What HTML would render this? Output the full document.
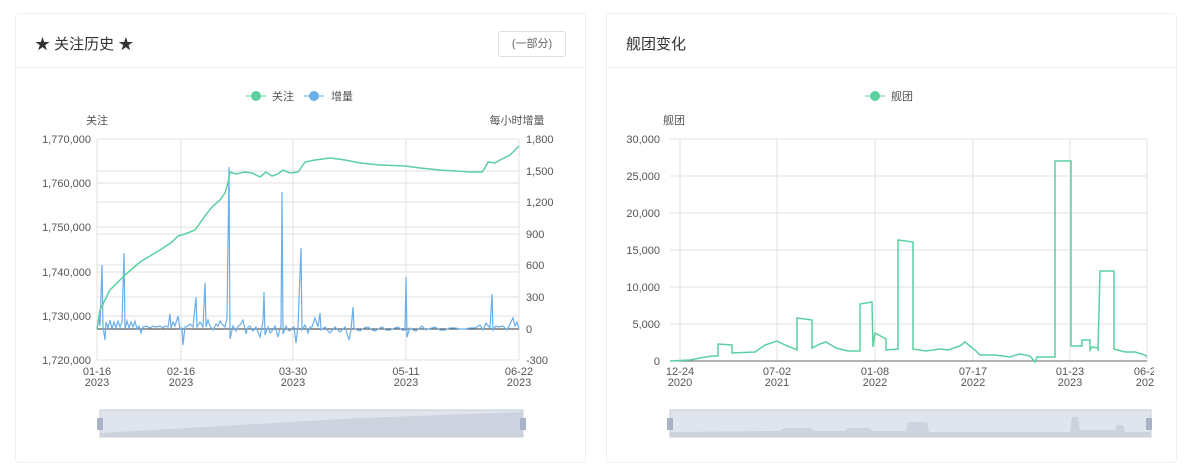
<!DOCTYPE html>
<html><head><meta charset="utf-8"><style>
body{margin:0;background:#fff;width:1192px;height:474px;overflow:hidden;font-family:"Liberation Sans","Noto Sans CJK SC",sans-serif;}
.card{position:absolute;top:13px;height:448px;border:1px solid #eef0f2;border-radius:4px;background:#fff}
.hd{position:absolute;left:0;right:0;top:0;height:53px;border-bottom:1px solid #eef0f2}
.t{position:absolute;left:19px;top:19px;font-size:15px;color:#333}
.btn{position:absolute;right:19px;top:17px;width:66px;height:24px;border:1px solid #dcdfe6;border-radius:3px;font-size:11px;color:#666;text-align:center;line-height:24px}
svg{position:absolute;left:0;top:0}
text{font-family:"Liberation Sans","Noto Sans CJK SC",sans-serif;font-size:11px;fill:#555}
</style></head><body>
<div class="card" style="left:15px;width:569px"><div class="hd"><div class="t">★ 关注历史 ★</div><div class="btn">(一部分)</div></div></div>
<div class="card" style="left:606px;width:569px"><div class="hd"><div class="t">舰团变化</div></div></div>
<svg width="1192" height="474">
<defs><clipPath id="c"><rect x="606" y="0" width="548" height="474"/></clipPath></defs>
<g stroke="#e0e0e0" stroke-width="1">
<line x1="97" y1="139" x2="519" y2="139"/><line x1="97" y1="171" x2="519" y2="171"/><line x1="97" y1="183" x2="519" y2="183"/><line x1="97" y1="202" x2="519" y2="202"/><line x1="97" y1="227" x2="519" y2="227"/><line x1="97" y1="234" x2="519" y2="234"/><line x1="97" y1="265" x2="519" y2="265"/><line x1="97" y1="272" x2="519" y2="272"/><line x1="97" y1="297" x2="519" y2="297"/><line x1="97" y1="316" x2="519" y2="316"/><line x1="97" y1="360" x2="519" y2="360"/>
<line x1="97" y1="139" x2="97" y2="360"/><line x1="181" y1="139" x2="181" y2="360"/><line x1="293" y1="139" x2="293" y2="360"/><line x1="406" y1="139" x2="406" y2="360"/><line x1="519" y1="139" x2="519" y2="360"/>
<line x1="670" y1="139" x2="1147" y2="139"/><line x1="670" y1="176" x2="1147" y2="176"/><line x1="670" y1="213" x2="1147" y2="213"/><line x1="670" y1="250" x2="1147" y2="250"/><line x1="670" y1="287" x2="1147" y2="287"/><line x1="670" y1="324" x2="1147" y2="324"/>
<line x1="680" y1="139" x2="680" y2="361"/><line x1="777" y1="139" x2="777" y2="361"/><line x1="875" y1="139" x2="875" y2="361"/><line x1="973" y1="139" x2="973" y2="361"/><line x1="1070" y1="139" x2="1070" y2="361"/><line x1="1147" y1="139" x2="1147" y2="361"/>
</g>
<line x1="97" y1="329" x2="519" y2="329" stroke="#333"/>
<line x1="670" y1="361" x2="1147" y2="361" stroke="#666"/>
<g text-anchor="end">
<text x="91" y="143">1,770,000</text><text x="91" y="187">1,760,000</text><text x="91" y="231">1,750,000</text><text x="91" y="276">1,740,000</text><text x="91" y="320">1,730,000</text><text x="91" y="364">1,720,000</text>
<text x="660" y="143">30,000</text><text x="660" y="180">25,000</text><text x="660" y="217">20,000</text><text x="660" y="254">15,000</text><text x="660" y="291">10,000</text><text x="660" y="328">5,000</text><text x="660" y="365">0</text>
</g>
<g text-anchor="start"><text x="526" y="143">1,800</text><text x="526" y="175">1,500</text><text x="526" y="206">1,200</text><text x="526" y="238">900</text><text x="526" y="269">600</text><text x="526" y="301">300</text><text x="526" y="333">0</text><text x="526" y="364">-300</text></g>
<g text-anchor="middle">
<text x="97" y="375">01-16</text><text x="97" y="386">2023</text><text x="181" y="375">02-16</text><text x="181" y="386">2023</text><text x="293" y="375">03-30</text><text x="293" y="386">2023</text><text x="406" y="375">05-11</text><text x="406" y="386">2023</text><text x="519" y="375">06-22</text><text x="519" y="386">2023</text>
<text x="680" y="375">12-24</text><text x="680" y="386">2020</text><text x="777" y="375">07-02</text><text x="777" y="386">2021</text><text x="875" y="375">01-08</text><text x="875" y="386">2022</text><text x="973" y="375">07-17</text><text x="973" y="386">2022</text><text x="1070" y="375">01-23</text><text x="1070" y="386">2023</text>
<g clip-path="url(#c)"><text x="1148" y="375">06-22</text><text x="1148" y="386">2023</text></g>
<text x="97" y="124">关注</text><text x="517" y="124">每小时增量</text><text x="674" y="124">舰团</text>
</g>
<line x1="246" y1="96" x2="266" y2="96" stroke="#5ad0a0"/><circle cx="256" cy="96" r="5" fill="#5ad0a0"/><text x="272" y="100">关注</text>
<line x1="304" y1="96" x2="324" y2="96" stroke="#6aaeea"/><circle cx="314" cy="96" r="5" fill="#6aaeea"/><text x="331" y="100">增量</text>
<line x1="865" y1="96" x2="885" y2="96" stroke="#5ad0a0"/><circle cx="875" cy="96" r="5" fill="#5ad0a0"/><text x="891" y="100">舰团</text>
<polyline fill="none" stroke="#6aaeea" stroke-width="1.2" points="97,329 99,318 100,326 102,265 103,327 105,340 106,322 108,328 110,320 112,329 114,322 116,328 118,321 120,327 122,322 124,253 125,329 127,321 129,328 131,322 133,327 135,321 137,329 139,326 141,333 143,327 146,326 150,328 153,326 156,327 160,326 163,328 165,326 168,327 170,314 171,328 173,322 175,326 178,316 180,329 182,328 183,345 185,327 188,326 190,324 193,327 196,297 197,327 200,322 203,327 205,283 206,327 208,320 210,326 213,330 216,324 218,326 220,321 222,324 225,327 227,318 229,167 230,339 233,326 236,331 238,326 240,325 243,320 246,334 248,327 250,326 253,331 256,327 258,332 260,337 262,327 263,321 264,292 265,335 268,327 270,333 272,331 275,326 278,337 280,328 281,327 282,192 283,334 286,326 288,330 290,331 292,328 294,327 296,343 298,326 301,248 302,330 305,325 308,333 310,327 312,327 315,318 318,327 320,313 321,330 325,327 328,331 330,333 335,327 338,330 340,332 345,327 349,340 351,330 353,307 354,328 357,330 360,331 364,328 368,327 372,330 375,331 380,328 382,327 386,330 390,330 395,328 398,327 402,330 405,330 406,277 407,337 410,328 413,330 416,331 420,328 422,326 426,330 428,329 432,328 435,327 440,330 445,330 450,328 455,328 460,329 465,329 470,328 475,328 480,325 483,330 486,323 490,328 492,294 493,330 496,326 498,327 503,326 507,330 510,324 513,318 515,326 517,322 519,329"/>
<polyline fill="none" stroke="#5ad0a0" stroke-width="1.5" points="97,329 100,310 110,290 125,275 140,262 160,250 172,242 178,236 185,234 195,230 205,216 212,207 220,200 225,193 228,183 230,172 236,174 245,172 252,173 260,177 266,172 272,176 278,174 283,170 290,173 298,172 305,162 315,160 330,158 345,160 360,163 380,165 405,166 420,168 440,170 470,172 482,172 485,168 488,162 495,163 500,160 510,155 515,150 519,146"/>
<polyline fill="none" stroke="#5ad0a0" stroke-width="1.5" points="670,361 690,360 700,358 712,356 718,356 718,344 732,345 732,353 755,352 765,345 777,341 785,345 795,349 797,350 797,318 812,320 812,348 820,344 826,342 836,348 848,351 860,351 860,304 872,302 873,347 875,333 886,339 886,350 898,349 898,240 913,242 913,349 926,351 940,349 948,350 960,346 965,342 975,350 980,355 995,355 1010,357 1020,354 1030,356 1035,362 1037,357 1055,357 1055,161 1071,161 1071,346 1082,346 1082,340 1090,340 1090,350 1092,347 1098,348 1098,351 1100,271 1114,271 1114,349 1125,352 1135,352 1145,355 1147,357"/>
<rect x="100" y="410" width="423" height="27" fill="#e0e5ed" stroke="#c4ccd8"/>
<path d="M100,433 L360,418 L523,412 L523,437 L100,437Z" fill="#cdd3de"/>
<rect x="97" y="418" width="6" height="12" fill="#a8b3c8"/><rect x="520" y="418" width="6" height="12" fill="#a8b3c8"/>
<rect x="670" y="410" width="481" height="27" fill="#e0e5ed" stroke="#c4ccd8"/>
<path d="M670,432 L780,431 L785,428 L810,428 L815,431 L845,431 L848,428 L870,428 L872,431 L906,431 L908,422 L927,422 L929,432 L1070,432 L1072,417 L1078,417 L1080,430 L1115,430 L1117,425 L1123,425 L1125,432 L1151,432 L1151,437 L670,437Z" fill="#cdd3de"/>
<rect x="667" y="418" width="6" height="12" fill="#a8b3c8"/><rect x="1146" y="418" width="6" height="12" fill="#a8b3c8"/>
</svg>
</body></html>
